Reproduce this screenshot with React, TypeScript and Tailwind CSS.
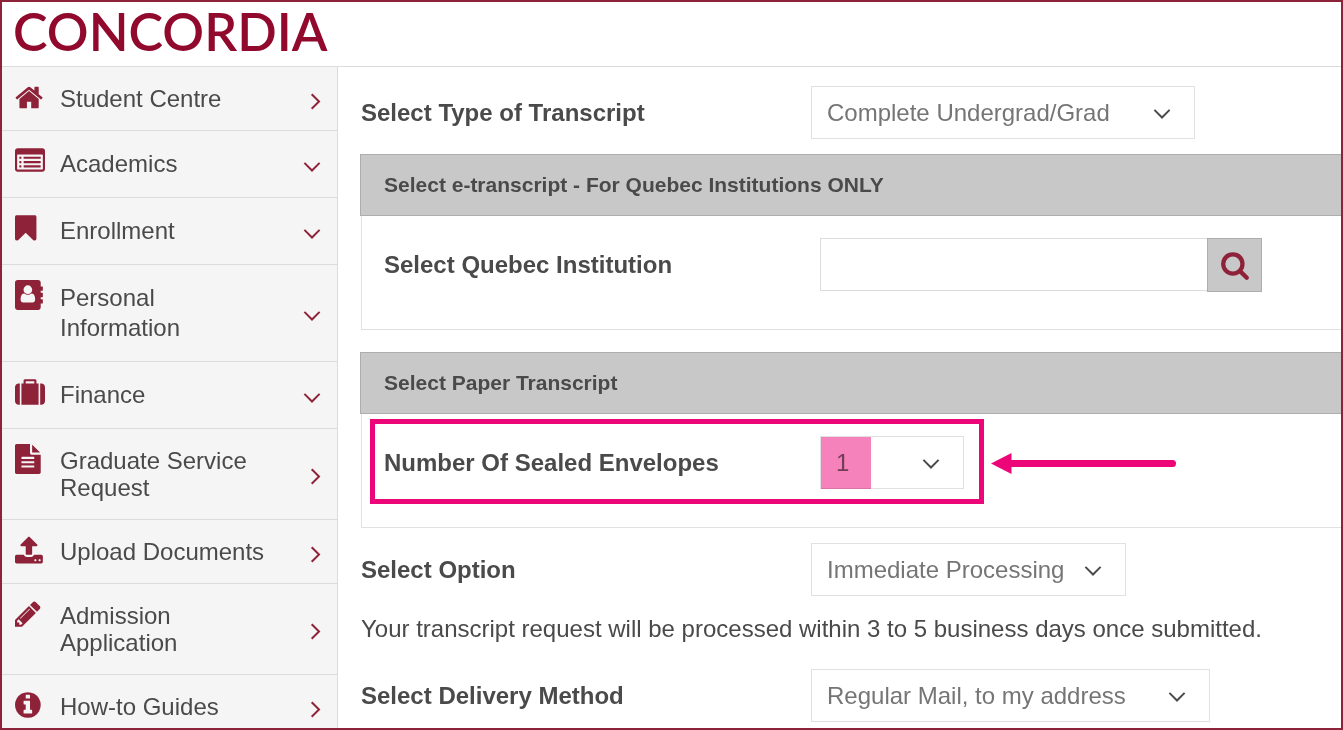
import type { ReactNode } from "react";

const icons = {
  home: {
    box: "56 -32 1792 1792",
    d: "M1472 992v480q0 26-19 45t-45 19h-384v-384h-256v384h-384q-26 0-45-19t-19-45v-480q0-1 .5-3t.5-3l575-474 575 474q1 2 1 6zm223-69l-62 74q-8 9-21 11h-3q-13 0-21-7l-692-577-692 577q-12 8-24 7-13-2-21-11l-62-74q-8-10-7-23.5t11-21.5l719-599q32-26 76-26t76 26l244 204v-195q0-14 9-23t23-9h192q14 0 23 9t9 23v408l219 182q10 8 11 21.5t-7 23.5z",
  },
  list: {
    box: "0 0 1792 1792",
    d: "M384 1184v64q0 13-9.5 22.5t-22.5 9.5h-64q-13 0-22.5-9.5t-9.5-22.5v-64q0-13 9.5-22.5t22.5-9.5h64q13 0 22.5 9.5t9.5 22.5zm0-256v64q0 13-9.5 22.5t-22.5 9.5h-64q-13 0-22.5-9.5t-9.5-22.5v-64q0-13 9.5-22.5t22.5-9.5h64q13 0 22.5 9.5t9.5 22.5zm0-256v64q0 13-9.5 22.5t-22.5 9.5h-64q-13 0-22.5-9.5t-9.5-22.5v-64q0-13 9.5-22.5t22.5-9.5h64q13 0 22.5 9.5t9.5 22.5zm1152 512v64q0 13-9.5 22.5t-22.5 9.5h-960q-13 0-22.5-9.5t-9.5-22.5v-64q0-13 9.5-22.5t22.5-9.5h960q13 0 22.5 9.5t9.5 22.5zm0-256v64q0 13-9.5 22.5t-22.5 9.5h-960q-13 0-22.5-9.5t-9.5-22.5v-64q0-13 9.5-22.5t22.5-9.5h960q13 0 22.5 9.5t9.5 22.5zm0-256v64q0 13-9.5 22.5t-22.5 9.5h-960q-13 0-22.5-9.5t-9.5-22.5v-64q0-13 9.5-22.5t22.5-9.5h960q13 0 22.5 9.5t9.5 22.5zm128 704v-832q0-13-9.5-22.5t-22.5-9.5h-1472q-13 0-22.5 9.5t-9.5 22.5v832q0 13 9.5 22.5t22.5 9.5h1472q13 0 22.5-9.5t9.5-22.5zm128-1088v1088q0 66-47 113t-113 47h-1472q-66 0-113-47t-47-113v-1088q0-66 47-113t113-47h1472q66 0 113 47t47 113z",
  },
  bookmark: {
    box: "256 0 1792 1792",
    d: "M1420 128q23 0 44 9 33 13 52.5 41t19.5 62v1289q0 34-19.5 62t-52.5 41q-19 8-44 8-48 0-83-32l-441-424-441 424q-36 33-83 33-23 0-44-9-33-13-52.5-41t-19.5-62v-1289q0-34 19.5-62t52.5-41q21-9 44-9h1048z",
  },
  addressBook: {
    box: "0 124 1792 1792",
    d: "M1201 1298q0-57-5.5-107t-21-100.5-39.5-86-64-58-91-22.5q-6 4-33.5 20.5t-42.5 24.5-40.5 20-49 17-46.5 5-46.5-5-49-17-40.5-20-42.5-24.5-33.5-20.5q-51 0-91 22.5t-64 58-39.5 86-21 100.5-5.5 107q0 73 42 121.5t103 48.5h576q61 0 103-48.5t42-121.5zm-173-594q0-108-76.5-184t-183.5-76-183.5 76-76.5 184q0 107 76.5 183t183.5 76 183.5-76 76.5-183zm636 604v192q0 14-9 23t-23 9h-96v224q0 66-47 113t-113 47h-1216q-66 0-113-47t-47-113v-1472q0-66 47-113t113-47h1216q66 0 113 47t47 113v224h96q14 0 23 9t9 23v192q0 14-9 23t-23 9h-96v128h96q14 0 23 9t9 23v192q0 14-9 23t-23 9h-96v128h96q14 0 23 9t9 23z",
  },
  suitcase: {
    box: "0 0 1792 1792",
    d: "M640 384h512v-128h-512v128zm-352 0v1280h-64q-92 0-158-66t-66-158v-832q0-92 66-158t158-66h64zm1120 0v1280h-1024v-1280h128v-160q0-40 28-68t68-28h576q40 0 68 28t28 68v160h128zm384 224v832q0 92-66 158t-158 66h-64v-1280h64q92 0 158 66t66 158z",
  },
  file: {
    box: "128 0 1792 1792",
    d: "M1596 476q14 14 28 36h-472v-472q22 14 36 28zm-476 164h544v1056q0 40-28 68t-68 28h-1344q-40 0-68-28t-28-68v-1600q0-40 28-68t68-28h800v544q0 40 28 68t68 28zm160 736v-64q0-14-9-23t-23-9h-704q-14 0-23 9t-9 23v64q0 14 9 23t23 9h704q14 0 23-9t9-23zm0-256v-64q0-14-9-23t-23-9h-704q-14 0-23 9t-9 23v64q0 14 9 23t23 9h704q14 0 23-9t9-23zm0-256v-64q0-14-9-23t-23-9h-704q-14 0-23 9t-9 23v64q0 14 9 23t23 9h704q14 0 23-9t9-23z",
  },
  upload: {
    box: "64 -32 1792 1792",
    d: "M1344 1472q0-26-19-45t-45-19-45 19-19 45 19 45 45 19 45-19 19-45zm256 0q0-26-19-45t-45-19-45 19-19 45 19 45 45 19 45-19 19-45zm128-224v320q0 40-28 68t-68 28h-1472q-40 0-68-28t-28-68v-320q0-40 28-68t68-28h427q21 56 70.5 92t110.5 36h256q61 0 110.5-36t70.5-92h427q40 0 68 28t28 68zm-325-648q-17 40-59 40h-256v448q0 26-19 45t-45 19h-256q-26 0-45-19t-19-45v-448h-256q-42 0-59-40-17-39 14-69l448-448q18-19 45-19t45 19l448 448q31 30 14 69z",
  },
  pencil: {
    box: "128 0 1792 1792",
    d: "M491 1536l91-91-235-235-91 91v107h128v128h107zm523-928q0-22-22-22-10 0-17 7l-542 542q-7 7-7 17 0 22 22 22 10 0 17-7l542-542q7-7 7-17zm-54-192l416 416-832 832h-416v-416zm683 96q0 53-37 90l-166 166-416-416 166-165q36-38 90-38 53 0 91 38l235 234q37 39 37 91z",
  },
  info: {
    box: "128 0 1792 1792",
    d: "M1152 1376v-160q0-14-9-23t-23-9h-96v-512q0-14-9-23t-23-9h-320q-14 0-23 9t-9 23v160q0 14 9 23t23 9h96v320h-96q-14 0-23 9t-9 23v160q0 14 9 23t23 9h448q14 0 23-9t9-23zm-128-896v-160q0-14-9-23t-23-9h-192q-14 0-23 9t-9 23v160q0 14 9 23t23 9h192q14 0 23-9t9-23zm640 416q0 209-103 385.5t-279.5 279.5-385.5 103-385.5-103-279.5-279.5-103-385.5 103-385.5 279.5-279.5 385.5-103 385.5 103 279.5 279.5 103 385.5z",
  },
  search: {
    box: "0 0 1792 1792",
    d: "M1216 832q0-185-131.5-316.5t-316.5-131.5-316.5 131.5-131.5 316.5 131.5 316.5 316.5 131.5 316.5-131.5 131.5-316.5zm512 832q0 52-38 90t-90 38q-54 0-90-38l-343-342q-179 124-399 124-143 0-273.5-55.5t-225-150-150-225-55.5-273.5 55.5-273.5 150-225 225-150 273.5-55.5 273.5 55.5 225 150 150 225 55.5 273.5q0 220-124 399l343 343q37 37 37 90z",
  },
};

type IconName = keyof typeof icons;

const menu: { label: string; icon: IconName; expandable?: boolean }[] = [
  { label: "Student Centre", icon: "home" },
  { label: "Academics", icon: "list", expandable: true },
  { label: "Enrollment", icon: "bookmark", expandable: true },
  { label: "Personal Information", icon: "addressBook", expandable: true },
  { label: "Finance", icon: "suitcase", expandable: true },
  { label: "Graduate Service Request", icon: "file" },
  { label: "Upload Documents", icon: "upload" },
  { label: "Admission Application", icon: "pencil" },
  { label: "How-to Guides", icon: "info" },
];

function Icon({ name }: { name: IconName }) {
  return (
    <svg className="size-[30px] shrink-0 overflow-visible" viewBox={icons[name].box} fill="#8e2238" aria-hidden="true">
      <path d={icons[name].d} />
    </svg>
  );
}

function Chevron({ right = false, className = "" }: { right?: boolean; className?: string }) {
  return (
    <svg className={`size-[18px] shrink-0 ${className}`} viewBox="0 0 18 18" fill="none" stroke="currentColor" strokeWidth="2" aria-hidden="true">
      <path d={right ? "M8.7 1.2 16 8.5l-7.3 7.3" : "M1.4 4.9 9 12.500 16.600 4.900"} />
    </svg>
  );
}

function MenuItem({ label, icon, expandable }: { label: string; icon: IconName; expandable?: boolean }) {
  const content = (
    <>
      <span className="self-start pt-[15px]">
        <Icon name={icon} />
      </span>
      <span className="ml-[15px] flex-1 py-[18px]">{label}</span>
      <Chevron right={!expandable} className="ml-7 mt-[6px] text-[#8e2238]" />
    </>
  );
  return (
    <li className="border-b border-[#dcdcdc]">
      {expandable ? (
        <button type="button" aria-expanded="false" className="flex w-full items-center pl-[13px] pr-4 text-left leading-[30px]">
          {content}
        </button>
      ) : (
        <a href="#" className="flex items-center pl-[13px] pr-4 leading-[27px]">
          {content}
        </a>
      )}
    </li>
  );
}

function Select({ id, value, width }: { id: string; value: string; width: string }) {
  return (
    <div className={`relative ${width}`}>
      <select id={id} className="h-[53px] w-full appearance-none border border-[#e1e1e1] bg-white pl-[15px] pr-12 text-[#757575]">
        <option>{value}</option>
      </select>
      <Chevron className="pointer-events-none absolute right-6 top-[19px] text-[#4a4a4a]" />
    </div>
  );
}

function Row({ id, label, children }: { id: string; label: string; children: ReactNode }) {
  return (
    <div className="flex items-center">
      <label htmlFor={id} className="w-[450px] font-bold">
        {label}
      </label>
      {children}
    </div>
  );
}

function Panel({ title, children }: { title: string; children: ReactNode }) {
  return (
    <section className="-ml-px">
      <h2 className="border-y border-l border-[#adadad] bg-[#c8c8c8] pl-[23px] text-[21px] font-bold leading-[60px]">{title}</h2>
      <div className="ml-px min-h-[114px] border-b border-l border-[#e1e1e1] pl-[22px] pt-[22px]">{children}</div>
    </section>
  );
}

export default function App() {
  return (
    <div className="flex h-screen flex-col overflow-hidden border-2 border-[#8e2238] bg-white font-['Liberation_Sans',Arial,sans-serif] text-2xl text-[#4a4a4a]">
      <header className="flex h-[65px] shrink-0 items-center border-b border-[#dcdcdc] pb-[6px] pl-[11px]">
        <a href="#" className="font-[Lato,sans-serif] text-[52px] font-semibold leading-[58px] text-[#910a2e]">
          CONCORDIA
        </a>
      </header>
      <div className="flex min-h-0 flex-1">
        <nav className="w-[336px] shrink-0 overflow-hidden border-r border-[#dcdcdc] bg-[#f5f5f5]">
          <ul>
            {menu.map((item) => (
              <MenuItem key={item.label} {...item} />
            ))}
          </ul>
        </nav>

        <main className="min-w-0 flex-1 overflow-hidden pl-[23px] pt-[19px]">
          <Row id="type" label="Select Type of Transcript">
            <Select id="type" value="Complete Undergrad/Grad" width="w-[384px]" />
          </Row>

          <div className="my-[15px] flex flex-col gap-[22px]">
            <Panel title="Select e-transcript - For Quebec Institutions ONLY">
              <div className="flex items-center">
                <label htmlFor="institution" className="w-[436px] font-bold">
                  Select Quebec Institution
                </label>
                <div className="flex items-start">
                  <input id="institution" type="text" className="h-[53px] w-[387px] border border-r-0 border-[#dcdcdc] bg-white px-4" />
                  <button type="button" aria-label="Search" className="flex h-[54px] w-[55px] items-center justify-center border border-[#adadad] bg-[#c8c8c8]">
                    <Icon name="search" />
                  </button>
                </div>
              </div>
            </Panel>

            <Panel title="Select Paper Transcript">
              <div className="relative flex items-center">
                <label htmlFor="envelopes" className="w-[436px] font-bold">
                  Number Of Sealed Envelopes
                </label>
                <div className="relative">
                  <Select id="envelopes" value="1" width="w-36" />
                  <div className="pointer-events-none absolute bottom-0 left-px top-px w-[50px] bg-[#f682bb] mix-blend-multiply" />
                </div>
                {/* callout frame and arrow */}
                <div className="pointer-events-none absolute -left-[14px] -top-[17px] h-[85px] w-[614px] border-5 border-[#ec0677]" />
                <svg className="ml-[27px] h-[22px] w-[186px]" viewBox="0 0 186 22" fill="#ec0677" aria-hidden="true">
                  <path d="M0 11.5 20.5 1V22z" />
                  <path d="M18 11.5H181.5" stroke="#ec0677" strokeWidth="7" strokeLinecap="round" />
                </svg>
              </div>
            </Panel>
          </div>

          <Row id="option" label="Select Option">
            <Select id="option" value="Immediate Processing" width="w-[315px]" />
          </Row>
          <p className="mb-[22px] mt-[15px] leading-9">
            Your transcript request will be processed within 3 to 5 business days once submitted.
          </p>
          <Row id="delivery" label="Select Delivery Method">
            <Select id="delivery" value="Regular Mail, to my address" width="w-[399px]" />
          </Row>
        </main>
      </div>
    </div>
  );
}
